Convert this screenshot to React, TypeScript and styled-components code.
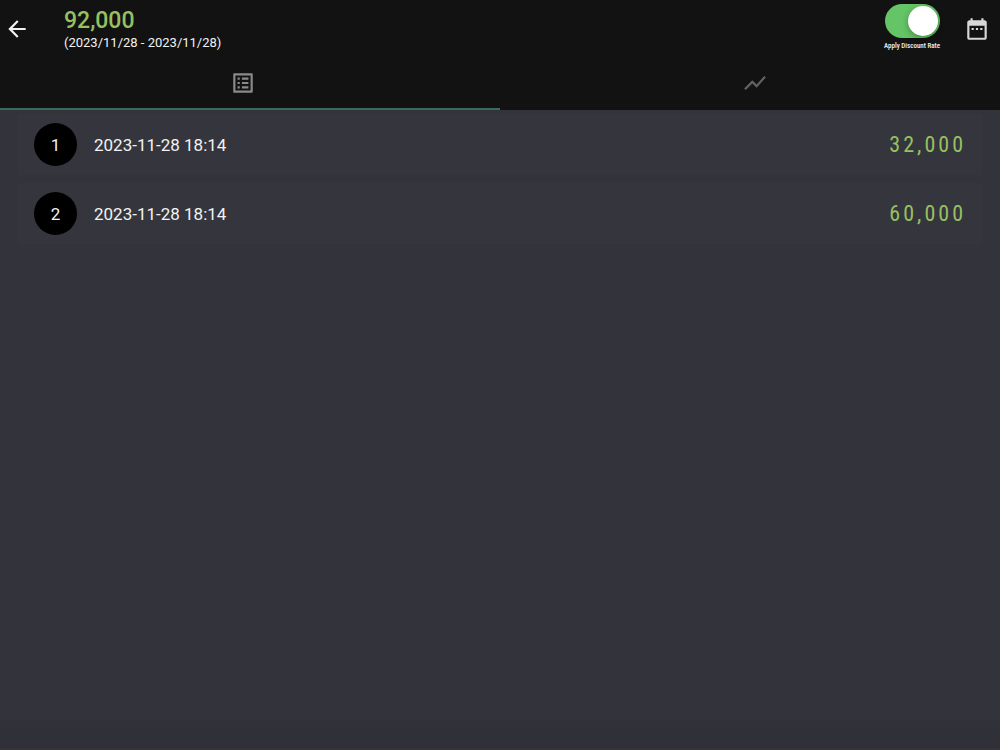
import { useState } from "react";
import styled, { createGlobalStyle } from "styled-components";
import { MdArrowBack, MdDateRange, MdListAlt, MdShowChart } from "react-icons/md";

const GlobalStyle = createGlobalStyle`
  *, *::before, *::after { box-sizing: border-box; }
  body {
    margin: 0;
    background: #33333c;
    color: #f2f2f2;
    font-family: Roboto, "Liberation Sans", sans-serif;
  }
  button { font: inherit; color: inherit; background: none; border: 0; padding: 0; cursor: pointer; }
`;

const Page = styled.div`
  min-height: 100vh;
  display: flex;
  flex-direction: column;
  border-bottom: 2px solid #38323a;
  background: linear-gradient(to top, #2f2f38, #33333c 40px);
`;

const Header = styled.header`
  background: #121212;
`;

const Toolbar = styled.div`
  display: flex;
  align-items: center;
  height: 57px;
  padding: 0 10px 0 4px;
`;

const IconButton = styled.button`
  display: flex;
  width: 26px;
  height: 26px;
  font-size: 26px;
`;

const CalendarButton = styled(IconButton)`
  color: #d8d8d8;
`;

const Summary = styled.div`
  flex: 1;
  margin-left: 34px;
`;

const Total = styled.h1`
  margin: 0;
  color: #97c160;
  font-size: 23px;
  line-height: 28px;
  font-weight: 500;
`;

const Period = styled.p`
  margin: 0;
  font-size: 13px;
  line-height: 16px;
`;

const Discount = styled.label`
  display: flex;
  flex-direction: column;
  align-items: center;
  gap: 3px;
  margin-right: 24px;
  padding-bottom: 3px;
  font-family: "Roboto Condensed", Roboto, sans-serif;
  font-size: 7px;
  line-height: 10px;
  font-weight: 500;
  cursor: pointer;
`;

const Switch = styled.input`
  appearance: none;
  width: 55px;
  height: 34px;
  margin: 0;
  padding: 2px;
  border-radius: 17px;
  background: #555;
  cursor: pointer;

  &::before {
    content: "";
    display: block;
    width: 30px;
    height: 30px;
    border-radius: 50%;
    background: #fff;
    box-shadow: 0 2px 6px rgba(0, 0, 0, 0.3);
  }
  &:checked { background: #64c466; }
  &:checked::before { margin-left: auto; }
`;

const Tabs = styled.div`
  display: grid;
  grid-template-columns: 1fr 1fr;
`;

const Tab = styled.button<{ $inset: "left" | "right" }>`
  display: flex;
  align-items: center;
  justify-content: center;
  height: 53px;
  padding-right: ${(p) => (p.$inset === "left" ? 14 : 0)}px;
  padding-left: ${(p) => (p.$inset === "right" ? 10 : 0)}px;
  font-size: 26px;
  color: #626262;
  border-bottom: 2px solid transparent;

  &[aria-selected="true"] {
    color: #8a8a8a;
    border-bottom-color: #386a62;
  }
`;

const Sales = styled.ol`
  list-style: none;
  margin: 0;
  padding: 4px 18px;
  display: flex;
  flex-direction: column;
  gap: 8px;
`;

const Sale = styled.li`
  display: flex;
  align-items: center;
  height: 61px;
  padding: 0 16px;
  background: #35353d;
`;

const Badge = styled.span`
  display: flex;
  align-items: center;
  justify-content: center;
  width: 43px;
  height: 43px;
  border-radius: 50%;
  background: #000;
  font-size: 17px;
`;

const Time = styled.time`
  flex: 1;
  margin-left: 17px;
  font-size: 17px;
  line-height: 20px;
`;

const Amount = styled.span`
  color: #97c160;
  font-family: "Roboto Condensed", Roboto, sans-serif;
  font-size: 22px;
  line-height: 26px;
  letter-spacing: 3px;
`;

const sales = [
  { time: "2023-11-28 18:14", amount: "32,000" },
  { time: "2023-11-28 18:14", amount: "60,000" },
];

export default function App() {
  const [discount, setDiscount] = useState(true);
  const [tab, setTab] = useState<"list" | "chart">("list");

  return (
    <Page>
      <GlobalStyle />
      <Header>
        <Toolbar>
          <IconButton type="button" aria-label="Back"><MdArrowBack /></IconButton>
          <Summary>
            <Total>92,000</Total>
            <Period>(2023/11/28 - 2023/11/28)</Period>
          </Summary>
          <Discount>
            <Switch type="checkbox" checked={discount} onChange={(e) => setDiscount(e.target.checked)} />
            Apply Discount Rate
          </Discount>
          <CalendarButton type="button" aria-label="Choose dates"><MdDateRange /></CalendarButton>
        </Toolbar>
        <Tabs role="tablist">
          <Tab type="button" role="tab" aria-label="List" $inset="left" aria-selected={tab === "list"} onClick={() => setTab("list")}>
            <MdListAlt />
          </Tab>
          <Tab type="button" role="tab" aria-label="Chart" $inset="right" aria-selected={tab === "chart"} onClick={() => setTab("chart")}>
            <MdShowChart />
          </Tab>
        </Tabs>
      </Header>
      <Sales>
        {sales.map((sale, i) => (
          <Sale key={i}>
            <Badge>{i + 1}</Badge>
            <Time>{sale.time}</Time>
            <Amount>{sale.amount}</Amount>
          </Sale>
        ))}
      </Sales>
    </Page>
  );
}
